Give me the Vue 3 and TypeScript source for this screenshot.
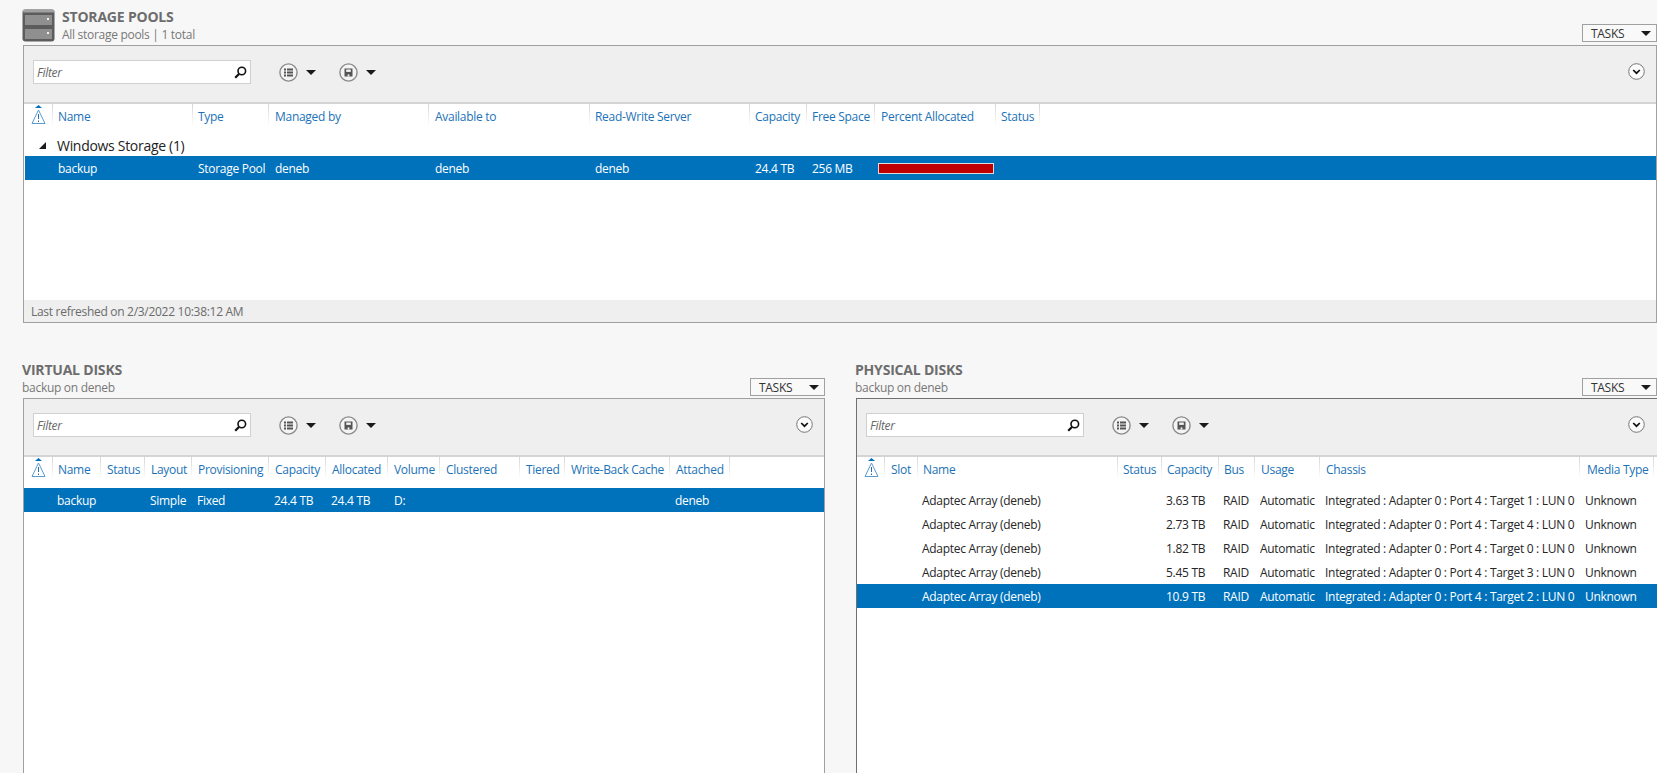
<script setup lang="ts">
interface Col { label: string; text: number; sep: number }
interface Cell { v?: string; x: number; bar?: boolean }
interface Row { cells: Cell[]; selected?: boolean }
interface Table {
  key: string
  origin: number
  cols: Col[]
  rows: Row[]
  group?: string
  footer?: string
}

const mkRow = (xs: number[], vals: (string | null)[], selected = false): Row => ({
  selected,
  cells: xs.map((x, i) => (vals[i] === null ? { x, bar: true } : { x, v: vals[i] as string }))
})

const poolsX = [58, 198, 275, 435, 595, 755, 812, 878]
const pools: Table = {
  key: 'pools',
  origin: 24,
  group: 'Windows Storage (1)',
  footer: 'Last refreshed on 2/3/2022 10:38:12 AM',
  cols: [
    { label: 'Name', text: 58, sep: 192 },
    { label: 'Type', text: 198, sep: 268 },
    { label: 'Managed by', text: 275, sep: 428 },
    { label: 'Available to', text: 435, sep: 589 },
    { label: 'Read-Write Server', text: 595, sep: 749 },
    { label: 'Capacity', text: 755, sep: 806 },
    { label: 'Free Space', text: 812, sep: 874 },
    { label: 'Percent Allocated', text: 881, sep: 995 },
    { label: 'Status', text: 1001, sep: 1039 }
  ],
  rows: [mkRow(poolsX, ['backup', 'Storage Pool', 'deneb', 'deneb', 'deneb', '24.4 TB', '256 MB', null], true)]
}

const virtX = [57, 150, 197, 274, 331, 394, 675]
const virtual: Table = {
  key: 'virtual',
  origin: 24,
  cols: [
    { label: 'Name', text: 58, sep: 100 },
    { label: 'Status', text: 107, sep: 144 },
    { label: 'Layout', text: 151, sep: 191 },
    { label: 'Provisioning', text: 198, sep: 268 },
    { label: 'Capacity', text: 275, sep: 325 },
    { label: 'Allocated', text: 332, sep: 387 },
    { label: 'Volume', text: 394, sep: 439 },
    { label: 'Clustered', text: 446, sep: 519 },
    { label: 'Tiered', text: 526, sep: 564 },
    { label: 'Write-Back Cache', text: 571, sep: 669 },
    { label: 'Attached', text: 676, sep: 729 }
  ],
  rows: [mkRow(virtX, ['backup', 'Simple', 'Fixed', '24.4 TB', '24.4 TB', 'D:', 'deneb'], true)]
}

const physX = [922, 1166, 1223, 1260, 1325, 1585]
const disk = (cap: string, target: number, selected = false) =>
  mkRow(physX, ['Adaptec Array (deneb)', cap, 'RAID', 'Automatic', `Integrated : Adapter 0 : Port 4 : Target ${target} : LUN 0`, 'Unknown'], selected)
const physical: Table = {
  key: 'physical',
  origin: 857,
  cols: [
    { label: 'Slot', text: 891, sep: 917 },
    { label: 'Name', text: 923, sep: 1117 },
    { label: 'Status', text: 1123, sep: 1161 },
    { label: 'Capacity', text: 1167, sep: 1218 },
    { label: 'Bus', text: 1224, sep: 1254 },
    { label: 'Usage', text: 1261, sep: 1319 },
    { label: 'Chassis', text: 1326, sep: 1579 },
    { label: 'Media Type', text: 1587, sep: 1653 }
  ],
  rows: [disk('3.63 TB', 1), disk('2.73 TB', 4), disk('1.82 TB', 0), disk('5.45 TB', 3), disk('10.9 TB', 2, true)]
}

const firstSep = (t: Table) => (t.key === 'physical' ? 884 : 52)

const headStyle = (t: Table, i: number) => {
  const c = t.cols[i]
  const start = i === 0 ? firstSep(t) + 1 : t.cols[i - 1].sep + 1
  return { width: `${c.sep + 1 - start}px`, paddingLeft: `${c.text - start}px` }
}
const iconColStyle = (t: Table) => ({ width: `${firstSep(t) + 1 - t.origin}px` })
const cellStyle = (r: Row, i: number) => {
  const next = r.cells[i + 1]
  const w = next ? next.x - r.cells[i].x : 140
  return { width: `${w}px` }
}
const rowPad = (t: Table, r: Row) => ({ paddingLeft: `${r.cells[0].x - t.origin}px` })
</script>

<template>
  <div class="page">
    <section class="pools">
      <header class="head head-top">
        <svg class="drive" width="33" height="33" viewBox="0 0 33 33">
          <rect x="0.5" y="0.5" width="32" height="32" rx="3" fill="#5c5c5c" />
          <rect x="0.5" y="0.5" width="32" height="3" rx="1.5" fill="#a0a0a0" />
          <rect x="3" y="6" width="27" height="10" fill="#8f8f8f" />
          <rect x="3" y="20" width="27" height="10" fill="#8f8f8f" />
          <rect x="25" y="9" width="2" height="2" fill="#f2f2f2" />
          <rect x="25" y="23" width="2" height="2" fill="#f2f2f2" />
        </svg>
        <div class="titles">
          <h2 class="title">STORAGE POOLS</h2>
          <p class="sub">All storage pools | 1 total</p>
        </div>
        <button class="tasks"><span>TASKS</span><i class="caret"></i></button>
      </header>
      <div v-for="t in [pools]" :key="t.key" class="panel panel-pools">
        <div class="toolbar">
          <div class="filter">
            <span>Filter</span>
            <svg width="13" height="13" viewBox="0 0 13 13"><circle cx="7.8" cy="5" r="3.8" fill="none" stroke="#111" stroke-width="1.6" /><path d="M5 8 L1.2 11.8" stroke="#111" stroke-width="2.2" /></svg>
          </div>
          <div class="tool">
            <svg class="circ" width="19" height="19" viewBox="0 0 19 19"><circle cx="9.5" cy="9.5" r="8.6" fill="#f4f4f4" stroke="#8a8a8a" stroke-width="1.4" /><path d="M5 5.5h2v2H5zM8 5.5h6v2H8zM5 8.5h2v2H5zM8 8.5h6v2H8zM5 11.5h2v2H5zM8 11.5h6v2H8z" fill="#555" /></svg>
            <i class="caret"></i>
          </div>
          <div class="tool">
            <svg class="circ" width="19" height="19" viewBox="0 0 19 19"><circle cx="9.5" cy="9.5" r="8.6" fill="#f4f4f4" stroke="#8a8a8a" stroke-width="1.4" /><path d="M5.5 5.5h8v8h-8z" fill="#555" /><path d="M7.2 6.5h4.6v2.4H7.2z" fill="#f4f4f4" /><path d="M8.6 11.4h1.8v2.1H8.6z" fill="#f4f4f4" /></svg>
            <i class="caret"></i>
          </div>
          <svg class="expand" width="17" height="17" viewBox="0 0 17 17"><circle cx="8.5" cy="8.5" r="7.8" fill="#fbfbfb" stroke="#777" /><path d="M5.2 7 L8.5 10.2 L11.8 7" fill="none" stroke="#111" stroke-width="1.7" /></svg>
        </div>
        <div class="cols">
          <div class="col icon-col" :style="iconColStyle(t)">
            <svg width="15" height="20" viewBox="0 0 15 20"><path d="M7.5 0 L11 3 H4 Z" fill="#0072bc" /><path d="M7.5 5 L14 18.5 H1 Z" fill="none" stroke="#5b9bd0" stroke-width="1" /><path d="M7.5 9v5M7.5 15.5v1.5" stroke="#1f6fb0" stroke-width="1" /></svg>
          </div>
          <div v-for="(c, i) in t.cols" :key="c.label" class="col" :style="headStyle(t, i)">{{ c.label }}</div>
        </div>
        <div class="list list-pools">
          <div class="group"><i class="tri"></i><span>{{ t.group }}</span></div>
          <div v-for="(r, ri) in t.rows" :key="ri" class="row sel row-inset">
            <div v-for="(c, i) in r.cells" :key="i" class="cell" :style="cellStyle(r, i)">
              <span v-if="c.bar" class="bar"></span>
              <template v-else>{{ c.v }}</template>
            </div>
          </div>
        </div>
        <footer class="foot">{{ t.footer }}</footer>
      </div>
    </section>

    <div class="lower">
      <section v-for="t in [virtual, physical]" :key="t.key" :class="['pane', 'pane-' + t.key]">
        <header class="head head-low">
          <div class="titles">
            <h2 class="title">{{ t.key === 'virtual' ? 'VIRTUAL DISKS' : 'PHYSICAL DISKS' }}</h2>
            <p class="sub">backup on deneb</p>
          </div>
          <button class="tasks"><span>TASKS</span><i class="caret"></i></button>
        </header>
        <div :class="['panel', 'panel-low', { focused: t.key === 'physical' }]">
          <div class="toolbar">
            <div class="filter">
              <span>Filter</span>
              <svg width="13" height="13" viewBox="0 0 13 13"><circle cx="7.8" cy="5" r="3.8" fill="none" stroke="#111" stroke-width="1.6" /><path d="M5 8 L1.2 11.8" stroke="#111" stroke-width="2.2" /></svg>
            </div>
            <div class="tool">
              <svg class="circ" width="19" height="19" viewBox="0 0 19 19"><circle cx="9.5" cy="9.5" r="8.6" fill="#f4f4f4" stroke="#8a8a8a" stroke-width="1.4" /><path d="M5 5.5h2v2H5zM8 5.5h6v2H8zM5 8.5h2v2H5zM8 8.5h6v2H8zM5 11.5h2v2H5zM8 11.5h6v2H8z" fill="#555" /></svg>
              <i class="caret"></i>
            </div>
            <div class="tool">
              <svg class="circ" width="19" height="19" viewBox="0 0 19 19"><circle cx="9.5" cy="9.5" r="8.6" fill="#f4f4f4" stroke="#8a8a8a" stroke-width="1.4" /><path d="M5.5 5.5h8v8h-8z" fill="#555" /><path d="M7.2 6.5h4.6v2.4H7.2z" fill="#f4f4f4" /><path d="M8.6 11.4h1.8v2.1H8.6z" fill="#f4f4f4" /></svg>
              <i class="caret"></i>
            </div>
            <svg class="expand" width="17" height="17" viewBox="0 0 17 17"><circle cx="8.5" cy="8.5" r="7.8" fill="#fbfbfb" stroke="#777" /><path d="M5.2 7 L8.5 10.2 L11.8 7" fill="none" stroke="#111" stroke-width="1.7" /></svg>
          </div>
          <div class="cols">
            <div class="col icon-col" :style="iconColStyle(t)">
              <svg width="15" height="20" viewBox="0 0 15 20"><path d="M7.5 0 L11 3 H4 Z" fill="#0072bc" /><path d="M7.5 5 L14 18.5 H1 Z" fill="none" stroke="#5b9bd0" stroke-width="1" /><path d="M7.5 9v5M7.5 15.5v1.5" stroke="#1f6fb0" stroke-width="1" /></svg>
            </div>
            <div v-for="(c, i) in t.cols" :key="c.label" class="col" :style="headStyle(t, i)">{{ c.label }}</div>
          </div>
          <div class="list">
            <div v-for="(r, ri) in t.rows" :key="ri" :class="['row', { sel: r.selected }]" :style="rowPad(t, r)">
              <div v-for="(c, i) in r.cells" :key="i" class="cell" :style="cellStyle(r, i)">{{ c.v }}</div>
            </div>
          </div>
        </div>
      </section>
    </div>
  </div>
</template>

<style>
html, body { margin: 0; background: #f7f7f7; overflow: hidden; }
</style>

<style scoped>
.page {
  width: 1657px;
  height: 773px;
  overflow: hidden;
  background: #f7f7f7;
  font-family: "Open Sans", "Noto Sans", sans-serif;
  font-size: 12px;
  letter-spacing: -0.29px;
  color: #262626;
}
.head { display: flex; align-items: flex-start; position: relative; }
.head-top { height: 45px; padding-left: 22px; box-sizing: border-box; }
.drive { margin-top: 9px; flex: none; }
.head-top .titles { margin-left: 7px; padding-top: 8px; }
.title {
  margin: 0;
  font-size: 14px;
  line-height: 18px;
  font-weight: 700;
  color: #6d6d6d;
  letter-spacing: -0.2px;
}
.sub { margin: 0; line-height: 18px; color: #777; font-size: 12px; }
.tasks {
  position: absolute;
  top: 24px;
  right: 0;
  width: 75px;
  height: 18px;
  box-sizing: border-box;
  display: flex;
  align-items: center;
  padding: 0 5px 0 8px;
  justify-content: space-between;
  border: 1px solid #a0a0a0;
  background: #f9f9f9;
  font: inherit;
  letter-spacing: inherit;
  color: #333;
}
.caret {
  display: block;
  width: 0;
  height: 0;
  border-left: 5px solid transparent;
  border-right: 5px solid transparent;
  border-top: 5px solid #1a1a1a;
}
.panel {
  background: #fff;
  border: 1px solid #a0a0a0;
  box-sizing: border-box;
  display: flex;
  flex-direction: column;
}
.panel-pools { margin-left: 23px; width: 1634px; height: 278px; }
.focused { border-color: #707070; }
.toolbar {
  height: 58px;
  flex: none;
  box-sizing: border-box;
  background: #efefef;
  border-bottom: 2px solid #d4d4d4;
  display: flex;
  align-items: flex-start;
  padding: 14px 0 0 9px;
  position: relative;
}
.filter {
  width: 218px;
  height: 24px;
  box-sizing: border-box;
  border: 1px solid #d0d0d0;
  background: #fff;
  display: flex;
  align-items: center;
  justify-content: space-between;
  padding: 0 3px;
  color: #666;
  font-style: italic;
  margin-right: 28px;
}
.tool { display: flex; align-items: center; gap: 8px; width: 60px; height: 24px; }
.circ { flex: none; }
.expand { position: absolute; top: 17px; right: 11px; }
.pane-physical .expand { right: 12px; }
.cols { display: flex; height: 31px; flex: none; }
.col {
  box-sizing: border-box;
  height: 22px;
  line-height: 25px;
  flex: none;
  color: #1b72b8;
  white-space: nowrap;
  background: linear-gradient(#d6d6d6, #fff) right top / 1px 100% no-repeat;
}
.icon-col { display: flex; justify-content: center; padding-top: 1px; line-height: 0; }
.list { flex: 1; min-height: 0; }
.list-pools { margin-top: -3px; }
.group {
  height: 24px;
  box-sizing: border-box;
  padding: 3px 0 0 15px;
  display: flex;
  align-items: center;
  font-size: 14px;
  letter-spacing: -0.3px;
  color: #222;
}
.tri {
  width: 0;
  height: 0;
  border-left: 7px solid transparent;
  border-bottom: 7px solid #1a1a1a;
  margin-right: 11px;
}
.row { display: flex; height: 24px; align-items: center; white-space: nowrap; box-sizing: border-box; }
.row-inset { margin-left: 1px; padding-left: 33px; }
.sel { background: #0072bc; color: #fff; }
.cell { flex: none; }
.bar {
  display: block;
  width: 116px;
  height: 11px;
  box-sizing: border-box;
  background: #c00000;
  border: 1px solid #dcdcdc;
}
.foot {
  flex: none;
  height: 22px;
  line-height: 24px;
  background: #efefef;
  color: #6b6b6b;
  padding-left: 7px;
}
.lower { display: flex; margin-top: 31px; }
.head-low { height: 44px; }
.pane-virtual { width: 825px; flex: none; padding-left: 22px; box-sizing: border-box; margin-right: 30px; }
.pane-physical { flex: 1; min-width: 0; }
.pane-virtual .panel { margin-left: 1px; width: 802px; }
.pane-physical .panel { margin-left: 1px; width: 802px; }
.head-low .titles { padding-top: 7px; }
.panel-low { height: 450px; }
</style>
